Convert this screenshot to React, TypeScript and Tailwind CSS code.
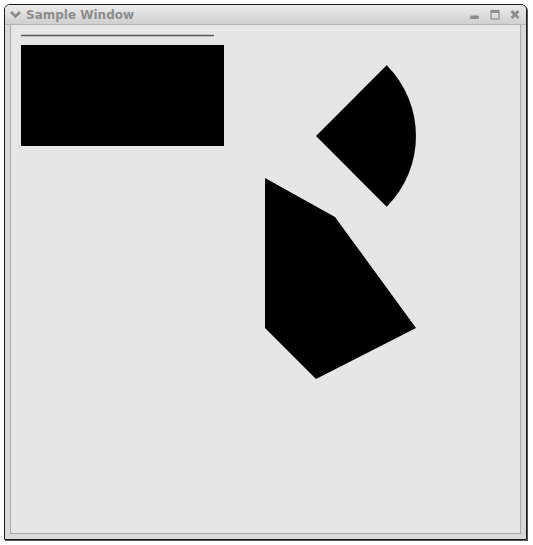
export default function App() {
  return (
    <div className="h-[545px] w-[533px] bg-white pl-[4px] pt-[4px]">
      <div className="flex h-[536px] w-[523px] flex-col overflow-hidden rounded-t-[6px] border border-[#1a1a1a] bg-[#d9d9d9] shadow-[1px_1px_0_#555]">
        {/* title bar */}
        <div className="flex h-[20px] shrink-0 items-center justify-between border-b border-[#b4b4b4] bg-gradient-to-b from-[#ececec] to-[#cfcfcf] pl-[5px] pr-[6px]">
          <div className="flex items-center gap-[5px]">
            <svg width="11" height="9" viewBox="0 0 11 9">
              <path d="M1 2 L5.5 6.5 L10 2" fill="none" stroke="#8a8a8a" strokeWidth="2.6" />
            </svg>
            <span className="font-['DejaVu_Sans',sans-serif] text-[12px] font-bold leading-none text-[#8c8c8c]">Sample Window</span>
          </div>
          <div className="flex items-center gap-[10px]">
            <svg width="11" height="11" viewBox="0 0 11 11">
              <rect x="1" y="6.5" width="9" height="3.5" rx="1.5" fill="#8c8c8c" />
            </svg>
            <svg width="10" height="11" viewBox="0 0 10 11">
              <rect x="1" y="1.5" width="8" height="8.5" fill="none" stroke="#8c8c8c" strokeWidth="1.2" />
              <rect x="1" y="1.5" width="8" height="2.5" fill="#8c8c8c" />
            </svg>
            <svg width="10" height="11" viewBox="0 0 10 11">
              <path d="M1.5 2 L8.5 9 M8.5 2 L1.5 9" stroke="#8c8c8c" strokeWidth="2.8" />
            </svg>
          </div>
        </div>
        {/* body */}
        <div className="flex min-h-0 flex-1 flex-col px-[5px] pb-[5px]">
          <div className="flex-1 border-x border-b border-[#a8a8a8] bg-[#e6e6e6]">
            <svg className="block" width="509" height="505" viewBox="11 25 509 505">
              <line x1="21" y1="35.5" x2="214" y2="35.5" stroke="#5a5a5a" strokeWidth="1.5" />
              <rect x="21" y="45" width="203" height="101" fill="#000" />
              <path d="M316 136 L386.7 65.3 A100 100 0 0 1 386.7 206.7 Z" fill="#000" />
              <polygon points="265,178 335,217 416,328 316,379 265,328" fill="#000" />
            </svg>
          </div>
        </div>
      </div>
    </div>
  );
}
